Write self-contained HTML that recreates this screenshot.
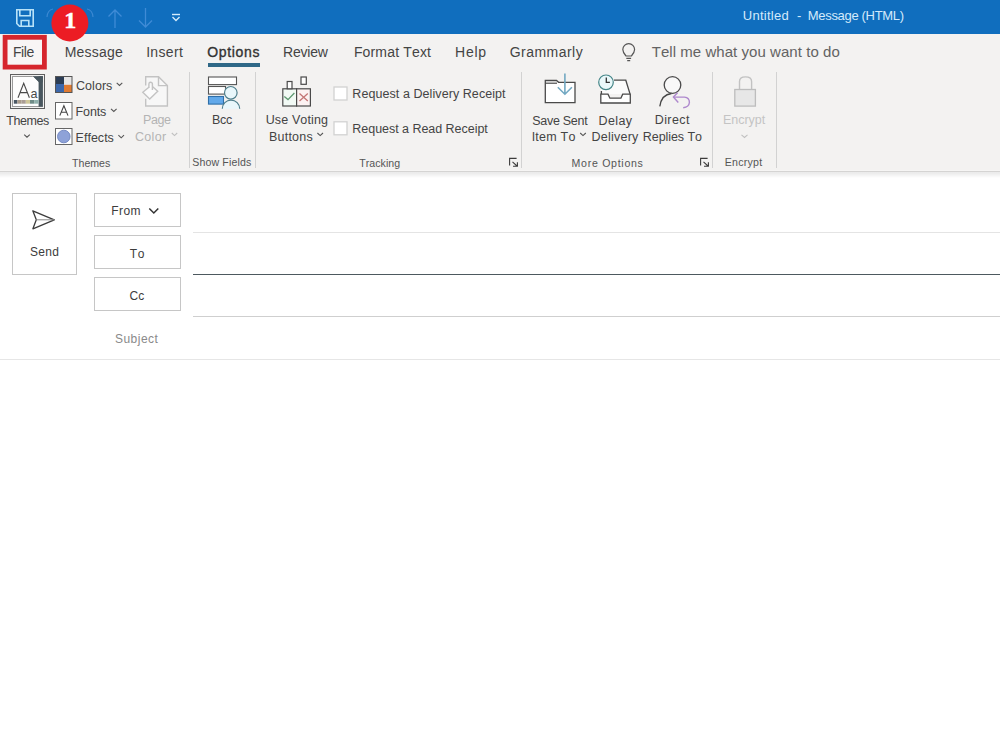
<!DOCTYPE html>
<html><head><meta charset="utf-8">
<style>
html,body{margin:0;padding:0;}
body{width:1000px;height:741px;overflow:hidden;position:relative;background:#fff;font-family:"Liberation Sans",sans-serif;}
.t{position:absolute;white-space:pre;font-kerning:none;}
.a{position:absolute;}
svg{position:absolute;overflow:visible;}
</style></head><body>
<!-- title bar -->
<div class="a" style="left:0;top:0;width:1000px;height:34px;background:#106ebe"></div>
<!-- ribbon -->
<div class="a" style="left:0;top:34px;width:1000px;height:137px;background:#f3f2f1"></div>
<div class="a" style="left:0;top:170px;width:1000px;height:1px;background:#f6f5f4"></div>
<div class="a" style="left:0;top:171px;width:1000px;height:1px;background:#d5d4d3"></div>
<div class="a" style="left:0;top:172px;width:1000px;height:6px;background:linear-gradient(#ebebeb,#ededed 25%,#fff)"></div>
<!-- separators -->
<div class="a" style="left:189px;top:72px;width:1px;height:96px;background:#d2d2d2"></div>
<div class="a" style="left:255px;top:72px;width:1px;height:96px;background:#d2d2d2"></div>
<div class="a" style="left:521px;top:72px;width:1px;height:96px;background:#d2d2d2"></div>
<div class="a" style="left:712px;top:72px;width:1px;height:96px;background:#d2d2d2"></div>
<div class="a" style="left:776px;top:72px;width:1px;height:96px;background:#d2d2d2"></div>
<!-- options underline -->
<div class="a" style="left:207.5px;top:63.2px;width:52.3px;height:3.4px;background:#2f6887"></div>
<!-- compose -->
<div class="a" style="left:12px;top:193px;width:63px;height:80px;border:1px solid #c6c6c6"></div>
<div class="a" style="left:94px;top:193px;width:85px;height:32px;border:1px solid #c6c6c6"></div>
<div class="a" style="left:94px;top:235px;width:85px;height:32px;border:1px solid #c6c6c6"></div>
<div class="a" style="left:94px;top:277px;width:85px;height:32px;border:1px solid #c6c6c6"></div>
<div class="a" style="left:193px;top:232px;width:807px;height:1px;background:#e4e4e4"></div>
<div class="a" style="left:193px;top:274px;width:807px;height:1px;background:#4d595f"></div>
<div class="a" style="left:193px;top:316px;width:807px;height:1px;background:#cfcfcf"></div>
<div class="a" style="left:0;top:359px;width:1000px;height:1px;background:#e6e6e6"></div>

<svg style="left:0;top:0" width="1000" height="741" viewBox="0 0 1000 741" fill="none" stroke-linecap="butt" stroke-linejoin="miter">
 <!-- title bar: save icon -->
 <g stroke="#b8e2f8" stroke-width="1.6">
  <path d="M16.8 9.8 H33.2 V26.2 H19.5 L16.8 23.5 Z"/>
  <path d="M19.8 9.8 V15.8 H30.2 V9.8"/>
  <path d="M21.2 26.2 V20.5 H28.8 V26.2"/>
 </g>
 <!-- faint undo/redo remnants -->
 <g stroke="#3b88d2" stroke-width="1.2">
  <path d="M47 17 Q47.5 10 53 9"/>
  <path d="M93 17 Q92.5 10 87 9"/>
 </g>
 <!-- up / down arrows -->
 <g stroke="#3f8bd6" stroke-width="1.3">
  <path d="M115 10 V28 M108.5 16.5 L115 10 L121.5 16.5"/>
  <path d="M145.5 8 V27 M139 20.5 L145.5 27 L152 20.5"/>
 </g>
 <g stroke="#d4ebfb" stroke-width="1.4">
  <path d="M172 14.5 H180"/>
  <path d="M172.5 17 L176 20.5 L179.5 17"/>
 </g>

 <!-- File red box -->
 <rect x="5.1" y="37.3" width="39.3" height="29.8" fill="#f8f5f5" stroke="#d6262d" stroke-width="4.8"/>

 <!-- Themes icon -->
 <rect x="10.5" y="74.5" width="34" height="34" stroke="#5f5f5f" stroke-width="1"/>
 <rect x="12.5" y="76.5" width="30" height="30" fill="#fdfdfd" stroke="#9a9a9a" stroke-width="1"/>
 <rect x="38.6" y="76.2" width="4.2" height="30.5" fill="#48565e"/>
 <path d="M32.6 76.2 H42.8 V82.2 H38.6 Z" fill="#48565e"/>
 <path d="M32.6 76.2 L38.6 82.2 H32.6 Z" fill="#fff"/>
 <path d="M18 97.8 L23.7 83.2 L29.4 97.8 M20 92.6 H27.4" stroke="#4a4a4a" stroke-width="1.1"/>
 <text x="30.4" y="97.9" font-family="Liberation Sans" font-size="12.6" fill="#4a4a4a">a</text>
 <rect x="13.8" y="100" width="3.6" height="3.7" fill="#4b5864"/>
 <rect x="17.4" y="100" width="4.2" height="3.7" fill="#a99b8b"/>
 <rect x="21.6" y="100" width="4.2" height="3.7" fill="#aa9d95"/>
 <rect x="25.8" y="100" width="4.2" height="3.7" fill="#cfc79a"/>
 <rect x="30" y="100" width="4.2" height="3.7" fill="#6e8b86"/>
 <rect x="34.2" y="100" width="4.4" height="3.7" fill="#8fb0ab"/>

 <!-- Colors icon -->
 <rect x="55.5" y="76.5" width="8.5" height="7.5" fill="#2b3d55"/>
 <rect x="55.5" y="84" width="8.5" height="8.5" fill="#3b67ab"/>
 <rect x="64" y="76.5" width="8" height="8.3" fill="#e6e6e6"/>
 <rect x="64" y="84.8" width="8" height="7.7" fill="#e07b32"/>
 <rect x="55.5" y="76.5" width="16.5" height="16" stroke="#555" stroke-width="1"/>
 <!-- Fonts icon -->
 <rect x="55.5" y="102.5" width="16.5" height="16.5" fill="#fff" stroke="#666" stroke-width="1"/>
 <path d="M59.8 115.6 L63.9 105.8 L68 115.6 M61.3 112.2 H66.5" stroke="#444" stroke-width="1.1"/>
 <!-- Effects icon -->
 <rect x="55.5" y="128.5" width="16.5" height="16" fill="#fff" stroke="#666" stroke-width="1"/>
 <circle cx="63.8" cy="136.5" r="6.3" fill="#8ea2d8" stroke="#6f84bf" stroke-width="0.9"/>

 <!-- Page color (disabled) -->
 <g stroke="#c3c3c3" stroke-width="1.4">
  <path d="M145.7 76.8 H158.5 L167.4 85.6 V106 H145.7 Z" fill="#f7f7f7" stroke="none"/>
  <path d="M145.7 85.6 V76.8 H158.5 L167.4 85.6 V106 H145.7 V98.8"/>
  <path d="M158.5 76.8 V85.6 H167.4"/>
  <path d="M150.7 85 L142.8 92.3 L149.7 99 L157.7 91.3 Z" fill="#fbfbfb" stroke="none"/>
  <path d="M148.9 87.2 L142.8 92.3 L149.7 99 L157.7 91.3 L152.4 86.6"/>
  <path d="M148.9 88 V84 A1.75 1.75 0 0 1 152.4 84 V90"/>
 </g>

 <!-- Bcc icon -->
 <rect x="208.5" y="77" width="28" height="7.6" fill="#fff" stroke="#555" stroke-width="1.1"/>
 <rect x="208.5" y="86.5" width="17" height="7.6" fill="#fff" stroke="#555" stroke-width="1.1"/>
 <rect x="208.5" y="96.5" width="15" height="7.6" fill="#62a9ea" stroke="#2f6fa8" stroke-width="1.1"/>
 <circle cx="230.8" cy="92.8" r="6.3" fill="#e9f7fb" stroke="#4f7f8c" stroke-width="1.2"/>
 <path d="M222.3 108.8 A8.7 8.7 0 0 1 239.7 108.8" fill="#e9f7fb" stroke="#4f7f8c" stroke-width="1.2"/>

 <!-- Voting icon -->
 <rect x="282.8" y="88.8" width="13.8" height="17.2" fill="#f2faf5" stroke="#4a4a4a" stroke-width="1.2"/>
 <rect x="296.6" y="88.8" width="13.8" height="17.2" fill="#fcf2f2" stroke="#4a4a4a" stroke-width="1.2"/>
 <rect x="287.2" y="81.5" width="4.8" height="7.3" fill="#fff" stroke="#4a4a4a" stroke-width="1.2"/>
 <rect x="301" y="77" width="5.3" height="7.3" fill="#fff" stroke="#4a4a4a" stroke-width="1.2"/>
 <path d="M284.3 96.4 L288 99.6 L294.4 93" stroke="#5f9a72" stroke-width="1.3"/>
 <path d="M299.5 93.5 L307.8 101 M307.8 93.5 L299.5 101" stroke="#c47676" stroke-width="1.3"/>

 <!-- checkboxes -->
 <rect x="334" y="87" width="13" height="13" fill="#fff" stroke="#d2d2d2" stroke-width="1.3"/>
 <rect x="334" y="121.8" width="13" height="13" fill="#fff" stroke="#d2d2d2" stroke-width="1.3"/>

 <!-- launchers -->
 <g stroke="#3c3c3c" stroke-width="1.1">
  <path d="M509.6 165.4 V158.4 H516.6"/>
  <path d="M512.5 161.9 L517 166 M517.4 162.2 V166.2 H513"/>
  <path d="M700.6 165.4 V158.4 H707.6"/>
  <path d="M703.5 161.9 L708 166 M708.4 162.2 V166.2 H704"/>
 </g>

 <!-- Save sent icon -->
 <path d="M545.3 102.7 V80.5 H556.5 L558.6 82.3 H575 V102.7 Z" fill="#fff" stroke="#4a4a4a" stroke-width="1.3"/>
 <path d="M545.3 83.2 H557" stroke="#4a4a4a" stroke-width="1.2"/>
 <path d="M564.9 73.5 V94.2 M557.8 87.2 L564.9 94.2 L571.9 87.2" stroke="#72a8c2" stroke-width="1.6"/>

 <!-- Delay delivery icon -->
 <path d="M604.5 80.2 H625.8 L630 94 H601.4 V86 Z" fill="#fbfbfb"/>
 <path d="M614 80.2 H625.8 L630 93.9 M601.4 91 V94" stroke="#4a4a4a" stroke-width="1.3"/>
 <path d="M600.8 94.2 H608 L609.9 98.2 H620.9 L622.7 94.2 H630.3 V103 H600.8 Z" fill="#fff" stroke="#4a4a4a" stroke-width="1.3"/>
 <circle cx="606" cy="82.3" r="7.3" fill="#eaf8fa" stroke="#458688" stroke-width="1.2"/>
 <path d="M606.3 77.6 V82.3 H609.9" stroke="#333" stroke-width="1.3"/>

 <!-- Direct replies icon -->
 <circle cx="672.5" cy="85" r="8.3" fill="#f8f8f8" stroke="#4a4a4a" stroke-width="1.3"/>
 <path d="M659.8 106.4 Q661.5 94.5 671.5 93.5" stroke="#454545" stroke-width="1.3"/>
 <path d="M673.4 97.1 H684.5 Q689.5 97.6 689.4 102.5 Q689 107 683.2 107.8" stroke="#ae88cd" stroke-width="1.4"/>
 <path d="M677.6 92.8 L673.4 97.1 L678.3 102.4" stroke="#ae88cd" stroke-width="1.4"/>

 <!-- Lock (disabled) -->
 <path d="M739.5 89.2 V81.5 Q739.5 76.9 745.5 76.9 Q751.6 76.9 751.6 81.5 V89.2" stroke="#c2c2c2" stroke-width="1.4"/>
 <rect x="734.8" y="89.5" width="20.6" height="16.6" fill="#e7e7e7" stroke="#bdbdbd" stroke-width="1.3"/>

 <!-- chevrons -->
 <g stroke="#555" stroke-width="1.1">
  <path d="M116.7 82.8 L119.5 85.4 L122.3 82.8"/>
  <path d="M111 108.8 L113.8 111.4 L116.6 108.8"/>
  <path d="M118.4 135.2 L121.2 137.8 L124 135.2"/>
  <path d="M24.2 134.6 L27 137.2 L29.8 134.6"/>
  <path d="M317.4 133 L320.2 135.6 L323 133"/>
  <path d="M580.2 133 L583 135.6 L585.8 133"/>
 </g>
 <g stroke="#c0c0c0" stroke-width="1.1">
  <path d="M171.8 133 L174.5 135.6 L177.2 133"/>
  <path d="M741.5 134.8 L744.5 137.4 L747.5 134.8"/>
 </g>
 <!-- From chevron -->
 <path d="M149.3 208.4 L153.8 213 L158.3 208.4" stroke="#333" stroke-width="1.5"/>

 <!-- Send icon -->
 <path d="M32.8 210.8 L54.3 219.8 L32.9 228.8 L36.3 219.8 Z" stroke="#3c3c3c" stroke-width="1.3" stroke-linejoin="round"/>
 <path d="M36.3 219.8 H54" stroke="#8a8a8a" stroke-width="1"/>

 <!-- lightbulb -->
 <g stroke="#555" stroke-width="1.2">
  <path d="M626 56 Q622.8 52.5 622.8 49.6 A5.9 5.9 0 0 1 634.6 49.6 Q634.6 52.5 631.4 56 Z"/>
  <path d="M626.3 58.4 H631.1 M627.2 60.6 H630.2"/>
 </g>

 <!-- badge -->
 <circle cx="69.9" cy="23" r="18.5" fill="#ec1c24"/>
</svg>
<div class="t" style="left:64.2px;top:8.4px;font-family:'Liberation Serif';font-weight:bold;font-size:24px;line-height:24px;color:#fff;-webkit-text-stroke:0.5px #fff">1</div>

<div class="t" style="left:742.79px;top:9.00px;font-size:13.00px;line-height:13.00px;letter-spacing:0.266px;color:#d4eafb;font-weight:normal">Untitled</div>
<div class="t" style="left:796.98px;top:9.00px;font-size:13.00px;line-height:13.00px;letter-spacing:0.000px;color:#d4eafb;font-weight:normal">-</div>
<div class="t" style="left:807.86px;top:9.00px;font-size:13.00px;line-height:13.00px;letter-spacing:-0.329px;color:#d4eafb;font-weight:normal">Message (HTML)</div>
<div class="t" style="left:12.88px;top:44.95px;font-size:14.00px;line-height:14.00px;letter-spacing:-0.411px;color:#444;font-weight:normal">File</div>
<div class="t" style="left:64.78px;top:45.05px;font-size:14.00px;line-height:14.00px;letter-spacing:0.187px;color:#444;font-weight:normal">Message</div>
<div class="t" style="left:146.14px;top:45.05px;font-size:14.00px;line-height:14.00px;letter-spacing:0.343px;color:#444;font-weight:normal">Insert</div>
<div class="t" style="left:207.24px;top:44.75px;font-size:14.00px;line-height:14.00px;letter-spacing:0.655px;color:#333;-webkit-text-stroke:0.35px currentColor;font-weight:normal">Options</div>
<div class="t" style="left:282.98px;top:45.15px;font-size:14.00px;line-height:14.00px;letter-spacing:-0.179px;color:#444;font-weight:normal">Review</div>
<div class="t" style="left:353.88px;top:45.15px;font-size:14.00px;line-height:14.00px;letter-spacing:0.163px;color:#444;font-weight:normal">Format Text</div>
<div class="t" style="left:455.08px;top:44.95px;font-size:14.00px;line-height:14.00px;letter-spacing:0.744px;color:#444;font-weight:normal">Help</div>
<div class="t" style="left:509.70px;top:44.95px;font-size:14.00px;line-height:14.00px;letter-spacing:0.472px;color:#444;font-weight:normal">Grammarly</div>
<div class="t" style="left:651.70px;top:44.00px;font-size:15.00px;line-height:15.00px;letter-spacing:0.049px;color:#636363;font-weight:normal">Tell me what you want to do</div>
<div class="t" style="left:6.15px;top:114.52px;font-size:12.50px;line-height:12.50px;letter-spacing:-0.386px;color:#444;font-weight:normal">Themes</div>
<div class="t" style="left:75.97px;top:79.52px;font-size:12.50px;line-height:12.50px;letter-spacing:0.056px;color:#444;font-weight:normal">Colors</div>
<div class="t" style="left:75.60px;top:106.02px;font-size:12.50px;line-height:12.50px;letter-spacing:-0.122px;color:#444;font-weight:normal">Fonts</div>
<div class="t" style="left:75.60px;top:131.52px;font-size:12.50px;line-height:12.50px;letter-spacing:0.011px;color:#444;font-weight:normal">Effects</div>
<div class="t" style="left:143.00px;top:114.12px;font-size:12.50px;line-height:12.50px;letter-spacing:-0.380px;color:#b4b4b4;font-weight:normal">Page</div>
<div class="t" style="left:134.97px;top:130.72px;font-size:12.50px;line-height:12.50px;letter-spacing:0.329px;color:#b4b4b4;font-weight:normal">Color</div>
<div class="t" style="left:212.00px;top:114.42px;font-size:12.50px;line-height:12.50px;letter-spacing:-0.294px;color:#444;font-weight:normal">Bcc</div>
<div class="t" style="left:265.73px;top:114.42px;font-size:12.50px;line-height:12.50px;letter-spacing:0.115px;color:#444;font-weight:normal">Use Voting</div>
<div class="t" style="left:268.90px;top:130.72px;font-size:12.50px;line-height:12.50px;letter-spacing:0.248px;color:#444;font-weight:normal">Buttons</div>
<div class="t" style="left:352.30px;top:88.22px;font-size:12.50px;line-height:12.50px;letter-spacing:0.073px;color:#444;font-weight:normal">Request a Delivery Receipt</div>
<div class="t" style="left:352.30px;top:122.92px;font-size:12.50px;line-height:12.50px;letter-spacing:-0.034px;color:#444;font-weight:normal">Request a Read Receipt</div>
<div class="t" style="left:532.30px;top:114.52px;font-size:12.50px;line-height:12.50px;letter-spacing:-0.288px;color:#444;font-weight:normal">Save Sent</div>
<div class="t" style="left:531.67px;top:130.82px;font-size:12.50px;line-height:12.50px;letter-spacing:0.234px;color:#444;font-weight:normal">Item To</div>
<div class="t" style="left:598.60px;top:114.52px;font-size:12.50px;line-height:12.50px;letter-spacing:0.360px;color:#444;font-weight:normal">Delay</div>
<div class="t" style="left:591.50px;top:130.82px;font-size:12.50px;line-height:12.50px;letter-spacing:0.236px;color:#444;font-weight:normal">Delivery</div>
<div class="t" style="left:654.70px;top:114.12px;font-size:12.50px;line-height:12.50px;letter-spacing:0.426px;color:#444;font-weight:normal">Direct</div>
<div class="t" style="left:642.80px;top:131.12px;font-size:12.50px;line-height:12.50px;letter-spacing:-0.066px;color:#444;font-weight:normal">Replies To</div>
<div class="t" style="left:723.00px;top:114.12px;font-size:12.50px;line-height:12.50px;letter-spacing:-0.034px;color:#c4c4c4;font-weight:normal">Encrypt</div>
<div class="t" style="left:72.09px;top:157.53px;font-size:10.60px;line-height:10.60px;letter-spacing:-0.012px;color:#555;font-weight:normal">Themes</div>
<div class="t" style="left:192.28px;top:157.33px;font-size:10.60px;line-height:10.60px;letter-spacing:0.131px;color:#555;font-weight:normal">Show Fields</div>
<div class="t" style="left:359.19px;top:157.63px;font-size:10.60px;line-height:10.60px;letter-spacing:0.052px;color:#555;font-weight:normal">Tracking</div>
<div class="t" style="left:571.55px;top:158.03px;font-size:10.60px;line-height:10.60px;letter-spacing:0.704px;color:#555;font-weight:normal">More Options</div>
<div class="t" style="left:724.65px;top:157.23px;font-size:10.60px;line-height:10.60px;letter-spacing:0.265px;color:#555;font-weight:normal">Encrypt</div>
<div class="t" style="left:29.92px;top:245.84px;font-size:12.00px;line-height:12.00px;letter-spacing:0.309px;color:#3c3c3c;font-weight:normal">Send</div>
<div class="t" style="left:111.14px;top:204.64px;font-size:12.00px;line-height:12.00px;letter-spacing:0.473px;color:#3c3c3c;font-weight:normal">From</div>
<div class="t" style="left:129.76px;top:247.74px;font-size:12.00px;line-height:12.00px;letter-spacing:0.670px;color:#3c3c3c;font-weight:normal">To</div>
<div class="t" style="left:129.40px;top:289.54px;font-size:12.00px;line-height:12.00px;letter-spacing:0.174px;color:#3c3c3c;font-weight:normal">Cc</div>
<div class="t" style="left:114.92px;top:332.84px;font-size:12.00px;line-height:12.00px;letter-spacing:0.488px;color:#8a8a8a;font-weight:normal">Subject</div>
</body></html>
